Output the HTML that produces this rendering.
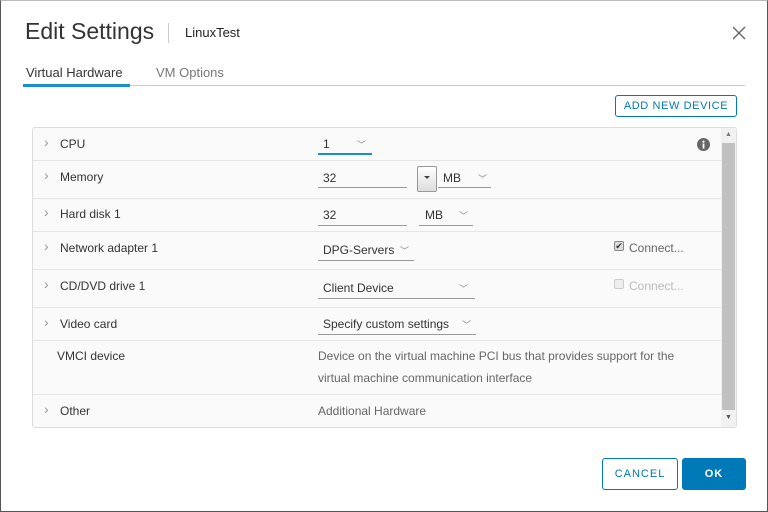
<!DOCTYPE html>
<html><head><style>
*{margin:0;padding:0;box-sizing:border-box}
body{width:768px;height:512px;position:relative;background:#fff;font-family:"Liberation Sans",sans-serif;color:#333;overflow:hidden}
.a{position:absolute;white-space:nowrap}
.frame{position:absolute;left:0;top:0;width:768px;height:512px;border:1px solid #555;border-top:1px solid #bbb}
.t{font-size:12px;color:#333}
.g{font-size:12px;color:#666}
.chev{position:absolute;left:44px;font-size:14px;color:#999;line-height:14px;margin-top:-3px}
.ul{position:absolute;height:1px;background:#999}
.line{position:absolute;left:33px;width:688px;height:1px;background:#e6e6e6}
.dd{font-size:9px;color:#888}
</style></head><body>
<div class="frame"></div>
<div class="a" style="left:25px;top:18px;font-size:23px;color:#333">Edit Settings</div>
<div class="a" style="left:168px;top:23px;width:1px;height:20px;background:#ccc"></div>
<div class="a" style="left:185px;top:25px;font-size:13px;color:#222">LinuxTest</div>
<svg class="a" style="left:732px;top:26px" width="14" height="14"><path d="M1 1L13 13M13 1L1 13" stroke="#666" stroke-width="1.4"/></svg>
<div class="a" style="left:26px;top:65px;font-size:13px;color:#333">Virtual Hardware</div>
<div class="a" style="left:156px;top:65px;font-size:13px;color:#777">VM Options</div>
<div class="a" style="left:23px;top:85px;width:722px;height:1px;background:#ccc"></div>
<div class="a" style="left:23px;top:84px;width:107px;height:3px;background:#1a8fcf"></div>
<div class="a" style="left:615px;top:95px;width:122px;height:22px;border:1px solid #0079b8;border-radius:3px;color:#0079b8;font-size:11px;letter-spacing:.6px;text-align:center;line-height:20px">ADD NEW DEVICE</div>

<div class="a" style="left:32px;top:127px;width:705px;height:301px;border:1px solid #ddd;border-radius:3px;background:#fafafa"></div>
<div class="a" style="left:721px;top:128px;width:15px;height:299px;background:#f1f1f1"></div>
<div class="a" style="left:722px;top:143px;width:13px;height:267px;background:#c1c1c1"></div>
<div class="a" style="left:725px;top:131px;font-size:7px;color:#777">▲</div>
<div class="a" style="left:725px;top:414px;font-size:7px;color:#555">▼</div>

<div class="line" style="top:160px"></div><div class="line" style="top:198px"></div><div class="line" style="top:231px"></div><div class="line" style="top:269px"></div><div class="line" style="top:307px"></div><div class="line" style="top:340px"></div><div class="line" style="top:394px"></div>

<div class="chev a" style="top:138px">›</div><div class="a t" style="left:60px;top:137px">CPU</div>
<div class="chev a" style="top:171px">›</div><div class="a t" style="left:60px;top:170px">Memory</div>
<div class="chev a" style="top:208px">›</div><div class="a t" style="left:60px;top:207px">Hard disk 1</div>
<div class="chev a" style="top:242px">›</div><div class="a t" style="left:60px;top:241px">Network adapter 1</div>
<div class="chev a" style="top:280px">›</div><div class="a t" style="left:60px;top:279px">CD/DVD drive 1</div>
<div class="chev a" style="top:318px">›</div><div class="a t" style="left:60px;top:317px">Video card</div>
<div class="a t" style="left:57px;top:349px">VMCI device</div>
<div class="chev a" style="top:405px">›</div><div class="a t" style="left:60px;top:404px">Other</div>

<div class="a t" style="left:323px;top:137px">1</div><div class="a dd" style="left:357px;top:138px">﹀</div>
<div class="a" style="left:318px;top:153px;width:54px;height:2px;background:#1a8fcf"></div>
<svg class="a" style="left:697px;top:138px" width="13" height="13"><circle cx="6.5" cy="6.5" r="6.5" fill="#666"/><rect x="5.6" y="5.5" width="1.8" height="5" fill="#fff"/><circle cx="6.5" cy="3.6" r="1.1" fill="#fff"/></svg>

<div class="a t" style="left:323px;top:171px">32</div><div class="ul" style="left:318px;top:187px;width:89px"></div>
<div class="a" style="left:417px;top:166px;width:20px;height:26px;border:1px solid #999;border-radius:2px;background:linear-gradient(#fff,#ddd)"></div>
<div class="a" style="left:424px;top:176px;width:0;height:0;border-left:3px solid transparent;border-right:3px solid transparent;border-top:3px solid #444"></div>
<div class="a t" style="left:443px;top:171px">MB</div><div class="a dd" style="left:478px;top:172px">﹀</div><div class="ul" style="left:438px;top:187px;width:53px"></div>

<div class="a t" style="left:323px;top:208px">32</div><div class="ul" style="left:318px;top:225px;width:89px"></div>
<div class="a t" style="left:425px;top:208px">MB</div><div class="a dd" style="left:459px;top:209px">﹀</div><div class="ul" style="left:419px;top:225px;width:54px"></div>

<div class="a t" style="left:323px;top:243px">DPG-Servers</div><div class="a dd" style="left:400px;top:244px">﹀</div><div class="ul" style="left:318px;top:260px;width:96px"></div>
<div class="a" style="left:614px;top:241px;width:10px;height:10px;border:1px solid #888;border-radius:2px;background:#ddd;font-size:9px;line-height:8px;text-align:center;color:#333">✔</div>
<div class="a g" style="left:629px;top:241px">Connect...</div>

<div class="a t" style="left:323px;top:281px">Client Device</div><div class="a dd" style="left:459px;top:282px">﹀</div><div class="ul" style="left:318px;top:298px;width:157px"></div>
<div class="a" style="left:614px;top:279px;width:10px;height:10px;border:1px solid #ccc;border-radius:2px;background:#eee"></div>
<div class="a" style="left:629px;top:279px;font-size:12px;color:#bbb">Connect...</div>

<div class="a t" style="left:323px;top:317px">Specify custom settings</div><div class="a dd" style="left:462px;top:318px">﹀</div><div class="ul" style="left:318px;top:334px;width:158px"></div>

<div class="a g" style="left:318px;top:349px">Device on the virtual machine PCI bus that provides support for the</div>
<div class="a g" style="left:318px;top:371px">virtual machine communication interface</div>
<div class="a g" style="left:318px;top:404px">Additional Hardware</div>

<div class="a" style="left:602px;top:458px;width:76px;height:32px;border:1px solid #0079b8;border-radius:3px;color:#0079b8;font-size:11px;letter-spacing:1px;text-align:center;line-height:30px">CANCEL</div>
<div class="a" style="left:682px;top:458px;width:64px;height:32px;background:#0079b8;border-radius:3px;color:#fff;font-size:11px;font-weight:bold;letter-spacing:1px;text-align:center;line-height:32px">OK</div>
</body></html>
